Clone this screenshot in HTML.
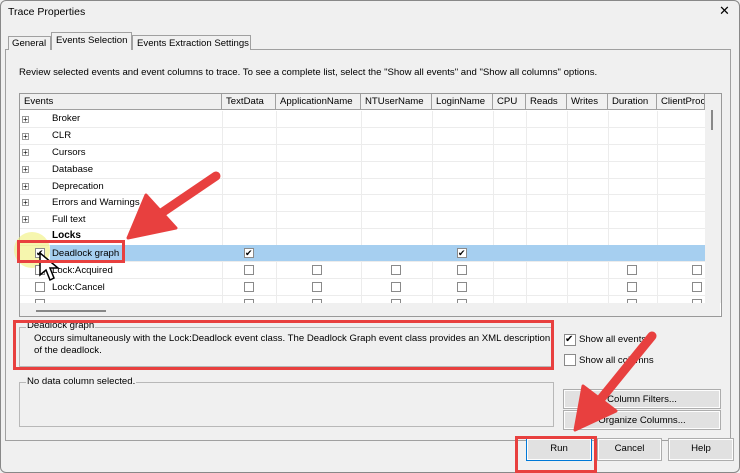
<!DOCTYPE html>
<html><head><style>
*{margin:0;padding:0;box-sizing:border-box}
body{width:740px;height:473px;background:#f0f0f0;font-family:"Liberation Sans",sans-serif;font-size:9.6px;color:#000;position:relative;overflow:hidden}
.a{position:absolute}
.t{position:absolute;white-space:nowrap}
.hd{position:absolute;top:94px;height:16px;border-right:1px solid #a0a0a0;border-bottom:1px solid #a0a0a0;background:#f0f0f0;padding:2px 0 0 4px;white-space:nowrap;overflow:hidden}
.cb{position:absolute;width:10px;height:10px;border:1px solid #8a8a8a;background:#fff}
.pl{position:absolute;width:7px;height:7px;border:1px solid #999;background:#fff;font-size:8px;line-height:5px;text-align:center}
.btn{position:absolute;border:1px solid #adadad;background:#e1e1e1;text-align:center;line-height:20px;box-shadow:inset 0 0 0 1px #fdfdfd}
.red{position:absolute;border:3px solid #e8403f}
</style></head><body>
<div class="a" style="left:0;top:0;width:740px;height:473px;border:1px solid #888;border-radius:6px"></div>
<div class="t" style="left:8px;top:6px;font-size:10.5px">Trace Properties</div>
<div class="t" style="left:719px;top:3px;font-size:13px">✕</div>
<div class="a" style="left:5px;top:49px;width:726px;height:392px;border:1px solid #a0a0a0;background:#f0f0f0"></div>
<div class="a" style="left:8px;top:36px;width:43px;height:14px;border:1px solid #a0a0a0;border-bottom:none;background:#f0f0f0"></div>
<div class="t" style="left:12px;top:38px">General</div>
<div class="a" style="left:51px;top:32px;width:81px;height:18px;border:1px solid #a0a0a0;border-bottom:none;background:#f0f0f0"></div>
<div class="t" style="left:56px;top:35px">Events Selection</div>
<div class="a" style="left:132px;top:35px;width:119px;height:15px;border:1px solid #a0a0a0;border-bottom:none;background:#f0f0f0"></div>
<div class="t" style="left:137px;top:38px">Events Extraction Settings</div>
<div class="t" style="left:19px;top:67px">Review selected events and event columns to trace. To see a complete list, select the "Show all events" and "Show all columns" options.</div>
<div class="a" style="left:19px;top:93px;width:703px;height:224px;border:1px solid #999;background:#fff"></div>
<div class="a" style="left:20px;top:303px;width:700px;height:13px;background:#f0f0f0"></div>
<div class="a" style="left:36px;top:310px;width:70px;height:2px;background:#888"></div>
<div class="a" style="left:705px;top:94px;width:16px;height:209px;background:#f0f0f0"></div>
<div class="a" style="left:711px;top:110px;width:2px;height:20px;background:#888"></div>
<div class="hd" style="left:20px;width:202px">Events</div>
<div class="hd" style="left:222px;width:54px">TextData</div>
<div class="hd" style="left:276px;width:85px">ApplicationName</div>
<div class="hd" style="left:361px;width:71px">NTUserName</div>
<div class="hd" style="left:432px;width:61px">LoginName</div>
<div class="hd" style="left:493px;width:33px">CPU</div>
<div class="hd" style="left:526px;width:41px">Reads</div>
<div class="hd" style="left:567px;width:41px">Writes</div>
<div class="hd" style="left:608px;width:49px">Duration</div>
<div class="hd" style="left:657px;width:48px">ClientProcessID</div>
<svg class="a" style="left:20px;top:111px" width="685" height="192">
<g stroke="#ececec" stroke-width="1">
<line x1="0" y1="16.5" x2="685" y2="16.5"/><line x1="0" y1="33.5" x2="685" y2="33.5"/><line x1="0" y1="50.5" x2="685" y2="50.5"/><line x1="0" y1="67.5" x2="685" y2="67.5"/><line x1="0" y1="83.5" x2="685" y2="83.5"/><line x1="0" y1="100.5" x2="685" y2="100.5"/><line x1="0" y1="117.5" x2="685" y2="117.5"/><line x1="0" y1="134.5" x2="685" y2="134.5"/><line x1="0" y1="150.5" x2="685" y2="150.5"/><line x1="0" y1="167.5" x2="685" y2="167.5"/><line x1="0" y1="184.5" x2="685" y2="184.5"/>
<line x1="202.5" y1="0" x2="202.5" y2="192"/><line x1="256.5" y1="0" x2="256.5" y2="192"/><line x1="341.5" y1="0" x2="341.5" y2="192"/><line x1="412.5" y1="0" x2="412.5" y2="192"/><line x1="473.5" y1="0" x2="473.5" y2="192"/><line x1="506.5" y1="0" x2="506.5" y2="192"/><line x1="547.5" y1="0" x2="547.5" y2="192"/><line x1="588.5" y1="0" x2="588.5" y2="192"/><line x1="637.5" y1="0" x2="637.5" y2="192"/>
</g></svg>
<div class="a" style="left:50px;top:245px;width:655px;height:16px;background:#a6cff0"></div>
<div class="pl" style="left:22px;top:116px">+</div><div class="t" style="left:52px;top:113px">Broker</div>
<div class="pl" style="left:22px;top:133px">+</div><div class="t" style="left:52px;top:130px">CLR</div>
<div class="pl" style="left:22px;top:149px">+</div><div class="t" style="left:52px;top:147px">Cursors</div>
<div class="pl" style="left:22px;top:166px">+</div><div class="t" style="left:52px;top:164px">Database</div>
<div class="pl" style="left:22px;top:183px">+</div><div class="t" style="left:52px;top:181px">Deprecation</div>
<div class="pl" style="left:22px;top:199px">+</div><div class="t" style="left:52px;top:197px">Errors and Warnings</div>
<div class="pl" style="left:22px;top:216px">+</div><div class="t" style="left:52px;top:214px">Full text</div>
<div class="t" style="left:52px;top:230px;font-weight:bold;font-size:10px">Locks</div>
<div class="a" style="left:14px;top:232px;width:36px;height:36px;border-radius:50%;background:rgba(240,240,120,.6)"></div>
<div class="cb" style="left:35px;top:248px;font-size:9px;line-height:8px">✔</div>
<div class="t" style="left:52px;top:248px">Deadlock graph</div>
<div class="cb" style="left:35px;top:265px"></div><div class="t" style="left:52px;top:265px">Lock:Acquired</div>
<div class="cb" style="left:35px;top:282px"></div><div class="t" style="left:52px;top:282px">Lock:Cancel</div>
<div class="cb" style="left:35px;top:299px;height:4px;border-bottom:none"></div>
<div class="cb" style="left:244px;top:248px;font-size:9px;line-height:8px">✔</div>
<div class="cb" style="left:457px;top:248px;font-size:9px;line-height:8px">✔</div>
<div class="cb" style="left:244px;top:265px"></div><div class="cb" style="left:312px;top:265px"></div><div class="cb" style="left:391px;top:265px"></div><div class="cb" style="left:457px;top:265px"></div><div class="cb" style="left:627px;top:265px"></div><div class="cb" style="left:692px;top:265px"></div>
<div class="cb" style="left:244px;top:282px"></div><div class="cb" style="left:312px;top:282px"></div><div class="cb" style="left:391px;top:282px"></div><div class="cb" style="left:457px;top:282px"></div><div class="cb" style="left:627px;top:282px"></div><div class="cb" style="left:692px;top:282px"></div>
<div class="cb" style="left:244px;top:299px;height:4px;border-bottom:none"></div><div class="cb" style="left:312px;top:299px;height:4px;border-bottom:none"></div><div class="cb" style="left:391px;top:299px;height:4px;border-bottom:none"></div><div class="cb" style="left:457px;top:299px;height:4px;border-bottom:none"></div><div class="cb" style="left:627px;top:299px;height:4px;border-bottom:none"></div><div class="cb" style="left:692px;top:299px;height:4px;border-bottom:none"></div>
<svg class="a" style="left:38px;top:251px" width="24" height="34"><path d="M2 2 L2 24 L8 19 L12 29 L16 27 L12 17 L20 17 Z" fill="#fff" stroke="#000" stroke-width="1.5"/></svg>
<div class="a" style="left:19px;top:327px;width:534px;height:40px;border:1px solid #b8b8b8"></div>
<div class="t" style="left:26px;top:320px;background:#f0f0f0;padding:0 1px">Deadlock graph</div>
<div class="t" style="left:34px;top:333px">Occurs simultaneously with the Lock:Deadlock event class. The Deadlock Graph event class provides an XML description</div>
<div class="t" style="left:34px;top:345px">of the deadlock.</div>
<div class="a" style="left:19px;top:382px;width:535px;height:45px;border:1px solid #b8b8b8"></div>
<div class="t" style="left:26px;top:376px;background:#f0f0f0;padding:0 1px">No data column selected.</div>
<div class="cb" style="left:564px;top:334px;width:12px;height:12px;font-size:10px;line-height:10px">✔</div>
<div class="t" style="left:579px;top:334px">Show all events</div>
<div class="cb" style="left:564px;top:354px;width:12px;height:12px"></div>
<div class="t" style="left:579px;top:355px">Show all columns</div>
<div class="btn" style="left:563px;top:389px;width:158px;height:20px">Column Filters...</div>
<div class="btn" style="left:563px;top:410px;width:158px;height:20px">Organize Columns...</div>
<div class="btn" style="left:526px;top:438px;width:66px;height:23px;border-color:#0078d7">Run</div>
<div class="btn" style="left:597px;top:438px;width:65px;height:23px">Cancel</div>
<div class="btn" style="left:668px;top:438px;width:66px;height:23px">Help</div>
<div class="red" style="left:17px;top:240px;width:108px;height:23px"></div>
<div class="red" style="left:13px;top:320px;width:541px;height:50px"></div>
<div class="red" style="left:515px;top:436px;width:82px;height:37px"></div>
<svg class="a" style="left:0;top:0" width="740" height="473">
<g fill="#e8403f" stroke="#e8403f" stroke-linecap="round" stroke-linejoin="round">
<line x1="216" y1="176" x2="160" y2="214" stroke-width="9"/>
<polygon points="128,238 146,195 176,228" stroke-width="3"/>
<line x1="652" y1="336" x2="600" y2="400" stroke-width="9"/>
<polygon points="575,430 583,386 616,411" stroke-width="3"/>
</g></svg>
</body></html>
